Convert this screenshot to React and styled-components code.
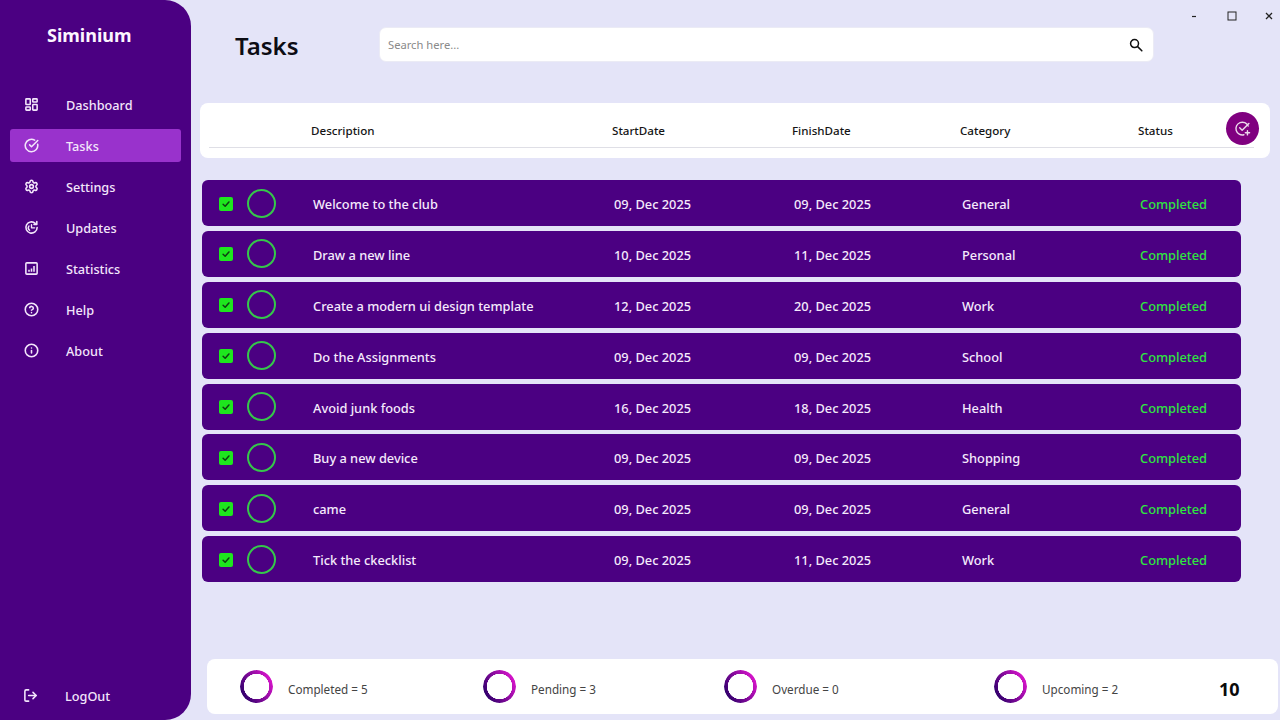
import React from "react";
import styled, { createGlobalStyle } from "styled-components";
import {
  CircleCheckBig,
  CircleHelp,
  Info,
  LayoutDashboard,
  LogOut,
  Settings,
} from "lucide-react";

const FONT = `"Noto Sans", "Open Sans", sans-serif`;

const GlobalStyle = createGlobalStyle`
  html, body {
    margin: 0;
    padding: 0;
    height: 100%;
    background: #e4e4f8;
    font-family: ${FONT};
    overflow: hidden;
  }
  * { box-sizing: border-box; }
`;

const Page = styled.div`
  position: relative;
  display: flex;
  width: 1280px;
  height: 720px;
`;

const Sidebar = styled.aside`
  display: flex;
  flex-direction: column;
  width: 191px;
  height: 100%;
  padding: 0 10px 8px;
  background: #4b0082;
  border-radius: 0 26px 26px 0;
`;

const Logo = styled.div`
  margin: 23px 0 0 37px;
  height: 24px;
  line-height: 24px;
  font-size: 18px;
  font-weight: 700;
  color: #fdf6ff;
`;

const NavList = styled.nav`
  display: flex;
  flex-direction: column;
  gap: 8px;
  margin-top: 41px;
`;

const NavItem = styled.a`
  display: grid;
  grid-template-columns: 42px 1fr;
  align-items: center;
  height: 33px;
  padding-left: 14px;
  border-radius: 3px;
  font-size: 12.7px;
  font-weight: 500;
  color: #f3e6fb;
  background: ${(p) => (p.$active ? "#9932cc" : "transparent")};
  svg {
    width: 15px;
    height: 15px;
    stroke-width: 2.5;
  }
`;

const BottomItem = styled(NavItem)`
  margin-top: auto;
  padding-left: 13px;
`;

const Main = styled.main`
  display: flex;
  flex: 1;
  flex-direction: column;
  min-width: 0;
`;

const WindowControls = styled.div`
  position: absolute;
  top: 11px;
  right: 6px;
  display: grid;
  grid-template-columns: 10px 10px 10px;
  gap: 27.5px;
  color: #222;
  svg {
    display: block;
    width: 10px;
    height: 10px;
  }
`;

const Header = styled.header`
  display: flex;
  align-items: center;
  height: 35px;
  margin-top: 27px;
  padding-left: 44px;
`;

const Title = styled.h1`
  width: 144px;
  margin: 2px 0 0;
  font-size: 24px;
  font-weight: 600;
  line-height: 34px;
  color: #0c0c14;
`;

const SearchBox = styled.div`
  display: flex;
  align-items: center;
  justify-content: space-between;
  width: 775px;
  height: 35px;
  padding: 0 10px 0 8px;
  background: #fff;
  border: 1px solid #ebebf5;
  border-radius: 7px;
  font-size: 11.2px;
  color: #8a8a8a;
  svg {
    width: 14px;
    height: 14px;
    color: #111;
  }
`;

const HeadCard = styled.div`
  width: 1070px;
  height: 55px;
  margin: 41px 0 0 9px;
  padding: 0 16px 0 9px;
  background: #fff;
  border-radius: 8px;
`;

const HeadRow = styled.div`
  display: grid;
  grid-template-columns: 102px 301px 180px 168px 178px 88px 33px;
  align-items: center;
  height: 45px;
  padding-top: 10px;
  border-bottom: 1px solid #dfdfe6;
  font-size: 11.6px;
  font-weight: 500;
  color: #141414;
`;

const AddButton = styled.button`
  display: flex;
  align-items: center;
  justify-content: center;
  width: 33px;
  height: 33px;
  margin-top: -3px;
  padding: 0;
  border: 0;
  border-radius: 50%;
  background: #800080;
  color: #ecd9ec;
  svg {
    width: 17px;
    height: 17px;
  }
`;

const TaskList = styled.div`
  display: flex;
  flex-direction: column;
  gap: 4.9px;
  width: 1039px;
  margin: 22px 0 0 11px;
`;

const TaskRow = styled.div`
  display: grid;
  grid-template-columns: 111px 301px 180px 168px 178px 1fr;
  align-items: center;
  height: 46px;
  padding-top: 2px;
  background: #4b0082;
  border-radius: 6px;
  font-size: 12.8px;
  font-weight: 500;
  color: #f5eafc;
`;

const Marks = styled.div`
  display: flex;
  align-items: center;
  gap: 14px;
  margin-top: -2px;
  padding-left: 17px;
`;

const CheckBox = styled.span`
  display: flex;
  align-items: center;
  justify-content: center;
  width: 14px;
  height: 14px;
  margin-top: 1px;
  background: #1ee61e;
  border-radius: 2px;
  color: #0f3d12;
  svg {
    width: 10px;
    height: 10px;
  }
`;

const Ring = styled.span`
  width: 29px;
  height: 29px;
  border: 2.4px solid #35c84a;
  border-radius: 50%;
`;

const Status = styled.span`
  color: #2fe63f;
`;

const Footer = styled.footer`
  display: grid;
  grid-template-columns: 243px 241px 270px 225px auto;
  align-items: center;
  width: 1071px;
  height: 55px;
  margin: auto 0 6px 16px;
  padding-left: 33px;
  background: #fff;
  border-radius: 8px;
`;

const Stat = styled.div`
  display: flex;
  align-items: center;
  gap: 15px;
  font-size: 11.7px;
  color: #444;
`;

const StatLabel = styled.span`
  padding-top: 4px;
`;

const StatRing = styled.span`
  width: 33px;
  height: 33px;
  border-radius: 50%;
  background: linear-gradient(60deg, #34006e 15%, #d414c8 85%);
  -webkit-mask: radial-gradient(circle, transparent 12.5px, #000 13px);
  mask: radial-gradient(circle, transparent 12.5px, #000 13px);
`;

const Total = styled.strong`
  padding-top: 4px;
  font-size: 18px;
  font-weight: 700;
  color: #0a0a0a;
`;

function UpdatesIcon() {
  return (
    <svg viewBox="0 0 24 24" fill="none" stroke="currentColor" strokeWidth="2.5" strokeLinecap="round" strokeLinejoin="round">
      <path d="M21 12a9 9 0 1 1-3-6.7" />
      <path d="M20.5 2.5v4.5H16" />
      <path d="M12 7.5V12.5H17" strokeWidth="2.2" />
      <path d="M8 9.5a5 5 0 0 0 1 7" strokeWidth="2.2" />
    </svg>
  );
}

function StatisticsIcon() {
  return (
    <svg viewBox="0 0 24 24" fill="none" stroke="currentColor" strokeWidth="2.5" strokeLinejoin="round">
      <rect x="3" y="3" width="18" height="18" rx="1.5" />
      <path d="M8 17v-3M12 17v-5M16 17V8" />
    </svg>
  );
}

function AddTaskIcon() {
  return (
    <svg viewBox="0 0 24 24" fill="none" stroke="currentColor" strokeWidth="2" strokeLinecap="round" strokeLinejoin="round">
      <path d="M20 8.5A9 9 0 1 0 14 20.8" />
      <path d="M8 11l3.5 3.5L21 5" />
      <path d="M19 15v6M16 18h6" />
    </svg>
  );
}

function CheckMark() {
  return (
    <svg viewBox="0 0 24 24" fill="none" stroke="currentColor" strokeWidth="3.5" strokeLinecap="round" strokeLinejoin="round">
      <path d="M5 12.5l5 5L19 7" />
    </svg>
  );
}

function SearchIcon() {
  return (
    <svg viewBox="0 0 24 24" fill="none" stroke="currentColor" strokeWidth="2.6" strokeLinecap="round">
      <circle cx="9.5" cy="9.5" r="6.8" />
      <path d="M14.8 14.8L22 22" />
    </svg>
  );
}

function MinimizeIcon() {
  return (
    <svg viewBox="0 0 10 10" fill="none" stroke="currentColor" strokeWidth="1.2">
      <path d="M3 5.5h4" />
    </svg>
  );
}

function MaximizeIcon() {
  return (
    <svg viewBox="0 0 10 10" fill="none" stroke="currentColor" strokeWidth="1">
      <rect x="1" y="1" width="8" height="8" />
    </svg>
  );
}

function CloseIcon() {
  return (
    <svg viewBox="0 0 10 10" fill="none" stroke="currentColor" strokeWidth="1.3">
      <path d="M2 2l6 6M8 2l-6 6" />
    </svg>
  );
}

const navItems = [
  { label: "Dashboard", icon: <LayoutDashboard /> },
  { label: "Tasks", icon: <CircleCheckBig />, active: true },
  { label: "Settings", icon: <Settings /> },
  { label: "Updates", icon: <UpdatesIcon /> },
  { label: "Statistics", icon: <StatisticsIcon /> },
  { label: "Help", icon: <CircleHelp /> },
  { label: "About", icon: <Info /> },
];

const tasks = [
  ["Welcome to the club", "09, Dec 2025", "09, Dec 2025", "General"],
  ["Draw a new line", "10, Dec 2025", "11, Dec 2025", "Personal"],
  ["Create a modern ui design template", "12, Dec 2025", "20, Dec 2025", "Work"],
  ["Do the Assignments", "09, Dec 2025", "09, Dec 2025", "School"],
  ["Avoid junk foods", "16, Dec 2025", "18, Dec 2025", "Health"],
  ["Buy a new device", "09, Dec 2025", "09, Dec 2025", "Shopping"],
  ["came", "09, Dec 2025", "09, Dec 2025", "General"],
  ["Tick the ckecklist", "09, Dec 2025", "11, Dec 2025", "Work"],
];

const stats = ["Completed = 5", "Pending = 3", "Overdue = 0", "Upcoming = 2"];

export default function App() {
  return (
    <Page>
      <GlobalStyle />
      <Sidebar>
        <Logo>Siminium</Logo>
        <NavList>
          {navItems.map((item) => (
            <NavItem key={item.label} $active={item.active}>
              {item.icon}
              <span>{item.label}</span>
            </NavItem>
          ))}
        </NavList>
        <BottomItem>
          <LogOut />
          <span>LogOut</span>
        </BottomItem>
      </Sidebar>
      <Main>
        <WindowControls>
          <MinimizeIcon />
          <MaximizeIcon />
          <CloseIcon />
        </WindowControls>
        <Header>
          <Title>Tasks</Title>
          <SearchBox>
            <span>Search here...</span>
            <SearchIcon />
          </SearchBox>
        </Header>
        <HeadCard>
          <HeadRow>
            <span />
            <span>Description</span>
            <span>StartDate</span>
            <span>FinishDate</span>
            <span>Category</span>
            <span>Status</span>
            <AddButton>
              <AddTaskIcon />
            </AddButton>
          </HeadRow>
        </HeadCard>
        <TaskList>
          {tasks.map(([name, start, finish, category]) => (
            <TaskRow key={name}>
              <Marks>
                <CheckBox>
                  <CheckMark />
                </CheckBox>
                <Ring />
              </Marks>
              <span>{name}</span>
              <span>{start}</span>
              <span>{finish}</span>
              <span>{category}</span>
              <Status>Completed</Status>
            </TaskRow>
          ))}
        </TaskList>
        <Footer>
          {stats.map((text) => (
            <Stat key={text}>
              <StatRing />
              <StatLabel>{text}</StatLabel>
            </Stat>
          ))}
          <Total>10</Total>
        </Footer>
      </Main>
    </Page>
  );
}
